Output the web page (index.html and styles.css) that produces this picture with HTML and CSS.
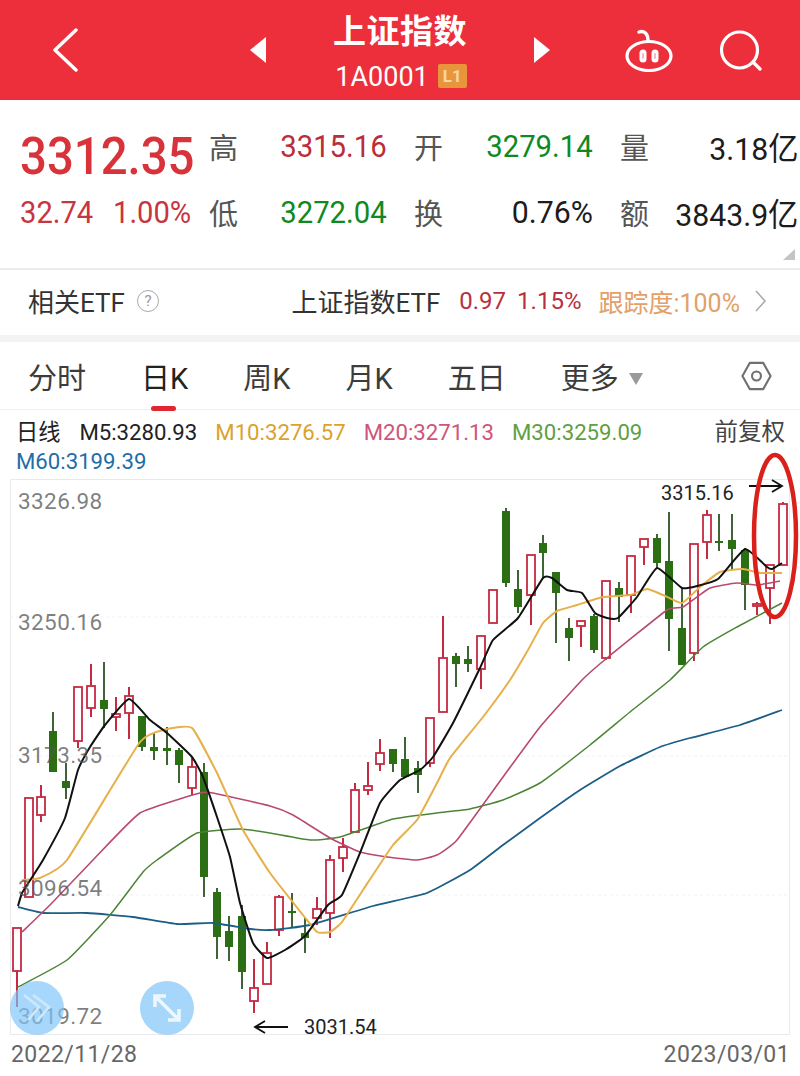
FILE: index.html
```html
<!DOCTYPE html>
<html lang="zh-CN">
<head>
    <meta charset="UTF-8">
    <meta name="viewport" content="width=device-width, initial-scale=1.0">
    <title>上证指数</title>
    <link rel="stylesheet" href="styles.css">
</head>
<body>
    <header class="top-bar">
        <svg class="icon-back" width="26" height="44" viewBox="0 0 26 44"><path d="M24 2 L3 22 L24 42" fill="none" stroke="#fff" stroke-width="3.4" stroke-linecap="round" stroke-linejoin="round"/></svg>
        <svg class="tri-left" width="16" height="26" viewBox="0 0 16 26"><path d="M16 0 V26 L0 13 Z" fill="#fff"/></svg>
        <div class="title-box">
            <h1>上证指数</h1>
            <div class="code">1A0001<span class="badge">L1</span></div>
        </div>
        <svg class="tri-right" width="16" height="26" viewBox="0 0 16 26"><path d="M0 0 V26 L16 13 Z" fill="#fff"/></svg>
        <svg class="icon-pig" width="48" height="44" viewBox="0 0 48 44">
            <path d="M14 4 C19 2 23 6 23 12" fill="none" stroke="#fff" stroke-width="3.4" stroke-linecap="round"/>
            <ellipse cx="24" cy="28" rx="22" ry="14.5" fill="none" stroke="#fff" stroke-width="3.2"/>
            <rect x="14.5" y="21.5" width="7" height="13" rx="3.5" fill="#fff"/>
            <rect x="26.5" y="21.5" width="7" height="13" rx="3.5" fill="#fff"/>
            <rect x="17" y="25" width="2" height="6" rx="1" fill="#f6b9bd"/>
            <rect x="29" y="25" width="2" height="6" rx="1" fill="#f6b9bd"/>
        </svg>
        <svg class="icon-search" width="44" height="44" viewBox="0 0 44 44">
            <circle cx="19.5" cy="21" r="18" fill="none" stroke="#fff" stroke-width="3.2"/>
            <path d="M33 33 L40 40" stroke="#fff" stroke-width="3.4" stroke-linecap="round"/>
        </svg>
    </header>

    <section class="quote">
        <div class="price"><span>3312.35</span></div>
        <div class="cell"><span class="lbl">高</span><span class="num red">3315.16</span></div>
        <div class="cell"><span class="lbl">开</span><span class="num green">3279.14</span></div>
        <div class="cell"><span class="lbl">量</span><span class="num plain">3.18亿</span></div>
        <div class="change"><span>32.74</span><span>1.00%</span></div>
        <div class="cell"><span class="lbl">低</span><span class="num green">3272.04</span></div>
        <div class="cell"><span class="lbl">换</span><span class="num plain">0.76%</span></div>
        <div class="cell"><span class="lbl">额</span><span class="num plain">3843.9亿</span></div>
        <div class="corner"></div>
    </section>

    <section class="etf-row">
        <div class="etf-left">
            <span>相关ETF</span>
            <span class="help">?</span>
        </div>
        <div class="etf-right">
            <span class="etf-name">上证指数ETF</span>
            <span class="etf-num">0.97</span>
            <span class="etf-num">1.15%</span>
            <span class="etf-track">跟踪度:100%</span>
            <svg width="12" height="24" viewBox="0 0 12 24"><path d="M1 2 L10 12 L1 22" fill="none" stroke="#aaa" stroke-width="1.6"/></svg>
        </div>
    </section>

    <nav class="tabs">
        <a>分时</a>
        <a class="active">日K</a>
        <a>周K</a>
        <a>月K</a>
        <a>五日</a>
        <a>更多<i class="caret"></i></a>
        <svg class="hex" width="31" height="30" viewBox="0 0 32 30">
            <path d="M9 1.5 H23 L30.5 15 L23 28.5 H9 L1.5 15 Z" fill="none" stroke="#707070" stroke-width="2.2" stroke-linejoin="round"/>
            <circle cx="16" cy="15" r="4.6" fill="none" stroke="#707070" stroke-width="2.2"/>
        </svg>
    </nav>

    <section class="legend">
        <span class="dark">日线</span>
        <span class="dark m5">M5:3280.93</span>
        <span class="m10">M10:3276.57</span>
        <span class="m20">M20:3271.13</span>
        <span class="m30">M30:3259.09</span>
        <span class="fq">前复权</span>
        <span class="m60">M60:3199.39</span>
    </section>

    <section class="chart">
        <svg class="plot" width="780" height="556" viewBox="10 479 780 556">
            <g class="grid">
                <path d="M10 617 H790 M10 756 H790 M10 895 H790"/>
            </g>

            <!-- wicks and bodies: red ones hollow, green ones filled -->
            <g class="up">
                <path class="wick" d="M17 971V1007 M29 897V890 M41 785V797 M41 815V822 M78 741V748 M91 664V686 M91 708V717 M116 697V714 M116 717V731 M129 687V696 M129 713V739 M192 758V767 M192 788V795 M254 959V988 M254 1001V1013 M267 942V953 M279 895V897 M279 930V936 M317 897V909 M317 918V925 M330 855V860 M330 913V938 M343 838V847 M343 858V872 M355 783V790 M368 762V786 M368 790V795 M380 739V753 M380 764V771 M430 763V767 M443 616V658 M481 669V689 M531 595V625 M581 626V647 M606 658V660 M631 595V613 M644 547V565 M694 653V661 M707 510V515 M707 542V559 M757 602V615 M770 588V624 M783 502V504"/>
                <rect x="13" y="928" width="8" height="43"/>
                <rect x="25" y="798" width="8" height="99"/>
                <rect x="37" y="797" width="8" height="18"/>
                <rect x="74" y="687" width="8" height="54"/>
                <rect x="87" y="686" width="8" height="22"/>
                <rect x="112" y="714" width="8" height="3"/>
                <rect x="125" y="696" width="8" height="17"/>
                <rect x="188" y="767" width="8" height="21"/>
                <rect x="250" y="988" width="8" height="13"/>
                <rect x="263" y="953" width="8" height="31"/>
                <rect x="275" y="897" width="8" height="33"/>
                <rect x="313" y="909" width="8" height="9"/>
                <rect x="326" y="860" width="8" height="53"/>
                <rect x="339" y="847" width="8" height="11"/>
                <rect x="351" y="790" width="8" height="42"/>
                <rect x="364" y="786" width="8" height="4"/>
                <rect x="376" y="753" width="8" height="11"/>
                <rect x="426" y="718" width="8" height="45"/>
                <rect x="439" y="658" width="8" height="54"/>
                <rect x="477" y="636" width="8" height="33"/>
                <rect x="489" y="590" width="8" height="33"/>
                <rect x="527" y="555" width="8" height="40"/>
                <rect x="577" y="621" width="8" height="5"/>
                <rect x="602" y="581" width="8" height="77"/>
                <rect x="627" y="556" width="8" height="39"/>
                <rect x="640" y="539" width="8" height="8"/>
                <rect x="690" y="544" width="8" height="109"/>
                <rect x="703" y="515" width="8" height="27"/>
                <rect x="753" y="604" width="8" height="2"/>
                <rect x="766" y="565" width="8" height="23"/>
                <rect x="779" y="504" width="8" height="61"/>
            </g>
            <g class="down">
                <path class="wick" d="M53 712V731 M66 763V799 M104 662V728 M142 747V751 M154 733V760 M167 727V765 M179 748V783 M204 763V897 M217 888V959 M229 916V961 M242 905V989 M292 893V927 M305 918V953 M393 764V772 M405 737V777 M418 761V793 M456 653V687 M468 646V672 M506 508V587 M518 570V613 M543 535V578 M556 572V643 M569 618V661 M594 614V653 M619 582V622 M657 534V568 M669 512V651 M682 587V665 M719 514V551 M732 514V570 M745 548V610"/>
                <rect x="49" y="731" width="8" height="41"/>
                <rect x="62" y="781" width="8" height="7"/>
                <rect x="100" y="700" width="8" height="9"/>
                <rect x="138" y="716" width="8" height="31"/>
                <rect x="150" y="747" width="8" height="4"/>
                <rect x="163" y="748" width="8" height="3"/>
                <rect x="175" y="750" width="8" height="15"/>
                <rect x="200" y="772" width="8" height="105"/>
                <rect x="213" y="892" width="8" height="45"/>
                <rect x="225" y="931" width="8" height="16"/>
                <rect x="238" y="916" width="8" height="56"/>
                <rect x="288" y="911" width="8" height="2"/>
                <rect x="301" y="933" width="8" height="5"/>
                <rect x="389" y="749" width="8" height="15"/>
                <rect x="401" y="759" width="8" height="18"/>
                <rect x="414" y="768" width="8" height="7"/>
                <rect x="452" y="656" width="8" height="8"/>
                <rect x="464" y="659" width="8" height="5"/>
                <rect x="502" y="511" width="8" height="72"/>
                <rect x="514" y="589" width="8" height="18"/>
                <rect x="539" y="543" width="8" height="10"/>
                <rect x="552" y="572" width="8" height="21"/>
                <rect x="565" y="628" width="8" height="10"/>
                <rect x="590" y="616" width="8" height="34"/>
                <rect x="615" y="588" width="8" height="9"/>
                <rect x="653" y="538" width="8" height="25"/>
                <rect x="665" y="561" width="8" height="58"/>
                <rect x="678" y="628" width="8" height="37"/>
                <rect x="715" y="541" width="8" height="2"/>
                <rect x="728" y="540" width="8" height="9"/>
                <rect x="741" y="550" width="8" height="35"/>
            </g>

            <polyline class="ma ma60" points="18,907 43,913 87,913 133,917 177,924 213,923 250,929 270,930 310,925 373,906 427,893 470,870 503,845 540,818 580,790 620,766 660,747 690,738 740,725 782,710"/>
            <polyline class="ma ma30" points="18,987 67,960 110,915 143,872 157,860 197,833 240,829 270,833 310,840 340,837 393,819 437,813 470,809 503,800 540,783 590,745 630,712 670,680 703,647 737,627 782,603"/>
            <polyline class="ma ma20" points="22,932 50,905 93,860 140,813 200,793 213,793 270,806 293,815 330,838 360,852 387,857 417,860 437,855 457,840 503,777 540,727 582,680 607,658 667,610 683,607 710,588 737,583 757,585 780,581"/>
            <polyline class="ma ma10" points="22,880 40,878 67,860 140,742 167,729 192,728 217,773 243,830 270,873 303,915 317,932 330,932 342,922 363,890 393,845 417,820 437,783 450,758 483,717 510,680 528,650 543,623 557,611 577,605 603,597 630,595 647,589 663,595 682,603 700,587 720,572 743,569 760,573 782,573"/>
            <polyline class="ma ma5" points="18,906 22,893 29,882 43,860 65,818 78,770 90,747 105,725 129,699 150,720 167,733 192,757 203,777 217,817 230,857 240,903 253,943 267,958 285,950 305,936 328,905 342,895 360,853 380,803 400,780 420,770 433,757 453,723 480,668 493,640 518,618 543,578 552,578 567,590 582,593 595,613 607,618 618,618 637,597 657,568 682,588 697,586 718,579 745,549 767,567 772,569 782,563"/>

            <g class="ylabels">
                <text x="18" y="509">3326.98</text>
                <text x="18" y="630">3250.16</text>
                <text x="18" y="763">3173.35</text>
                <text x="18" y="896">3096.54</text>
                <text x="18" y="1024">3019.72</text>
            </g>
            <g class="note">
                <text x="661" y="500">3315.16</text>
                <path d="M749 486 H782 M772 480 L782 486 L772 492"/>
                <text x="304" y="1034">3031.54</text>
                <path d="M288 1027 H255 M265 1021 L255 1027 L265 1033"/>
            </g>
            <ellipse class="mark" cx="775" cy="536" rx="21" ry="81"/>
        </svg>

        <div class="float-btn btn-a">
            <svg width="30" height="32" viewBox="0 0 30 32"><path d="M2 3 L17 15 L6 28 M11 3 L27 15 L15 29" fill="none" stroke="#cfe8fc" stroke-width="2.6"/></svg>
        </div>
        <div class="float-btn btn-b">
            <svg width="30" height="30" viewBox="0 0 30 30"><path d="M3 3 L27 27 M3 14 V3 H14 M27 16 V27 H16" fill="none" stroke="#eef7fe" stroke-width="3.6"/></svg>
        </div>
    </section>

    <footer class="dates">
        <span>2022/11/28</span>
        <span>2023/03/01</span>
    </footer>

    <script src="chart.js"></script>
</body>
</html>
```
FILE: styles.css
```css
* {
    box-sizing: border-box;
}
body {
    margin: 0;
    width: 800px;
    height: 1076px;
    overflow: hidden;
    background: #fff;
    color: #222;
    font-family: Roboto, "Noto Sans CJK SC", sans-serif;
}

.top-bar {
    height: 100px;
    background: #ec2f3b;
    color: #fff;
    display: flex;
    align-items: center;
    padding: 0 36px 0 52px;
}
.top-bar svg {
    flex: none;
}
.icon-back {
    margin-right: 172px;
}
.tri-right {
    margin-right: 75px;
}
.title-box {
    flex: none;
    width: 268px;
    margin-top: 5px;
    text-align: center;
}
.title-box h1 {
    margin: 0;
    font-size: 33px;
    font-weight: 700;
    line-height: 40px;
    letter-spacing: 0.5px;
}
.code {
    display: flex;
    justify-content: center;
    align-items: center;
    margin: 9px 0 0 2px;
    font-size: 27px;
    line-height: 32px;
}
.badge {
    width: 29px;
    height: 24px;
    margin: -2px 0 0 9px;
    border-radius: 2px;
    background: #e8953c;
    color: #f7d5a8;
    font-size: 17px;
    font-weight: 700;
    line-height: 24px;
}
.icon-pig {
    margin-right: 47px;
}
.icon-search {
    margin-top: 2px;
}

.quote {
    position: relative;
    height: 170px;
    padding: 13px 2px 0 20px;
    border-bottom: 2px solid #ececec;
    display: grid;
    grid-template-columns: 162px 178px 179px 178px;
    grid-template-rows: 66px 66px;
    column-gap: 27px;
    align-items: center;
}
.price {
    margin-top: 22px;
    font-size: 52px;
    line-height: 60px;
    font-weight: 500;
    color: #d8333a;
    white-space: nowrap;
}
.price span {
    display: inline-block;
    transform: scaleX(0.91);
    transform-origin: left;
}
.change {
    display: flex;
    gap: 15.5px;
    font-size: 31px;
    color: #c8353f;
    white-space: nowrap;
}
.change span {
    transform: scaleX(0.94);
    transform-origin: left;
}
.cell {
    display: flex;
    justify-content: space-between;
    align-items: center;
    white-space: nowrap;
}
.lbl {
    color: #555;
    font-size: 29px;
}
.num {
    font-size: 31px;
    transform: scaleX(0.945);
    transform-origin: right;
}
.plain {
    font-size: 32px;
    color: #1c1c1c;
}
.red {
    color: #bb2d3b;
}
.green {
    color: #0f8a1e;
}
.corner {
    position: absolute;
    right: 5px;
    bottom: 8px;
    width: 0;
    height: 0;
    border-left: 12px solid transparent;
    border-bottom: 11px solid #c4c4c4;
}

.etf-row {
    height: 72px;
    padding: 0 33px 4px 28px;
    border-bottom: 7px solid #f2f3f5;
    display: flex;
    justify-content: space-between;
    align-items: center;
    font-size: 26px;
    color: #333;
}
.etf-left {
    display: flex;
    align-items: center;
    gap: 12px;
}
.help {
    width: 22px;
    height: 22px;
    border: 1.5px solid #aaa;
    border-radius: 50%;
    color: #999;
    font-size: 15px;
    line-height: 20px;
    text-align: center;
}
.etf-right {
    display: flex;
    align-items: center;
}
.etf-num {
    color: #b8303e;
    margin-left: 11px;
    font-size: 24px;
}
.etf-name {
    margin-right: 8px;
}
.etf-track {
    color: #e2a06a;
    margin: 0 15px 0 17px;
    font-size: 25px;
}

.tabs {
    height: 68px;
    padding: 0 28px;
    border-bottom: 1px solid #eeeff2;
    display: flex;
    align-items: center;
    gap: 55px;
    font-size: 29px;
    color: #3c3c3c;
}
.tabs a {
    position: relative;
    white-space: nowrap;
}
.tabs .active {
    color: #222;
}
.tabs .active::after {
    content: "";
    position: absolute;
    left: 10px;
    bottom: -14px;
    width: 25px;
    height: 5px;
    border-radius: 3px;
    background: #e0262e;
}
.caret {
    display: inline-block;
    width: 0;
    height: 0;
    margin-left: 10px;
    border-left: 7.5px solid transparent;
    border-right: 7.5px solid transparent;
    border-top: 12px solid #999;
    vertical-align: 4px;
}
.hex {
    margin-left: auto;
}

.legend {
    height: 69px;
    padding: 8px 15px 0 16px;
    display: flex;
    flex-wrap: wrap;
    align-content: flex-start;
    font-size: 22.2px;
    line-height: 29px;
    white-space: nowrap;
}
.dark {
    color: #222;
}
.m5 {
    margin-left: 19px;
}
.m10 {
    color: #dba22c;
    margin-left: 18px;
}
.m20 {
    color: #cf5578;
    margin-left: 18px;
}
.m30 {
    color: #5fa044;
    margin-left: 18px;
}
.fq {
    margin-left: auto;
    color: #444;
    font-size: 23.5px;
}
.m60 {
    width: 100%;
    color: #1f6ea6;
}

.chart {
    position: relative;
    width: 780px;
    height: 556px;
    margin-left: 10px;
    border: 1px solid #e8eaee;
}
.plot {
    position: absolute;
    left: -1px;
    top: -1px;
    overflow: visible;
}
.grid path {
    stroke: #eef0f3;
    stroke-dasharray: 3 3;
    fill: none;
}
.ylabels text {
    font-size: 22.5px;
    fill: #555;
    fill-opacity: 0.75;
    letter-spacing: 0.4px;
}
.up rect {
    fill: #fff;
    stroke: #c42a42;
    stroke-width: 1.8;
}
.down rect {
    fill: #2c6e14;
}
.wick {
    fill: none;
    stroke-width: 2;
}
.up .wick {
    stroke: #c42a42;
}
.down .wick {
    stroke: #3f6337;
}
.ma {
    fill: none;
    stroke-linejoin: round;
}
.ma5 {
    stroke: #111;
    stroke-width: 2;
}
.ma10 {
    stroke: #e6b04a;
    stroke-width: 2;
}
.ma20 {
    stroke: #b8496f;
    stroke-width: 1.6;
}
.ma30 {
    stroke: #4c8436;
    stroke-width: 1.5;
}
.ma60 {
    stroke: #1c5f86;
    stroke-width: 1.8;
}
.note text {
    font-size: 20px;
    fill: #222;
}
.note path {
    fill: none;
    stroke: #111;
    stroke-width: 1.8;
}
.mark {
    fill: none;
    stroke: #d9201a;
    stroke-width: 4.5;
}

.float-btn {
    position: absolute;
    top: 501px;
    width: 54px;
    height: 54px;
    border-radius: 50%;
    display: flex;
    align-items: center;
    justify-content: center;
}
.btn-a {
    left: -1px;
    background: rgba(125, 196, 248, 0.68);
}
.btn-b {
    left: 129px;
    background: #a6d6f9;
}

.dates {
    display: flex;
    justify-content: space-between;
    padding: 6px 10px 0 11px;
    font-size: 23px;
    line-height: 28px;
    color: #666;
    letter-spacing: 0.4px;
}
```
FILE: chart.js
```js
// round the corners of the moving average polylines
document.querySelectorAll("polyline.ma").forEach(function (line) {
    const pts = line.getAttribute("points").trim().split(/\s+/).map(function (p) {
        return p.split(",").map(Number);
    });
    let d = "M" + pts[0].join(" ");
    for (let i = 0; i < pts.length - 1; i++) {
        const p0 = pts[i - 1] || pts[i];
        const p1 = pts[i];
        const p2 = pts[i + 1];
        const p3 = pts[i + 2] || p2;
        const c1 = [p1[0] + (p2[0] - p0[0]) / 14, p1[1] + (p2[1] - p0[1]) / 14];
        const c2 = [p2[0] - (p3[0] - p1[0]) / 14, p2[1] - (p3[1] - p1[1]) / 14];
        d += " C" + c1.join(" ") + " " + c2.join(" ") + " " + p2.join(" ");
    }
    const path = document.createElementNS("http://www.w3.org/2000/svg", "path");
    path.setAttribute("class", line.getAttribute("class"));
    path.setAttribute("d", d);
    line.replaceWith(path);
});
```
